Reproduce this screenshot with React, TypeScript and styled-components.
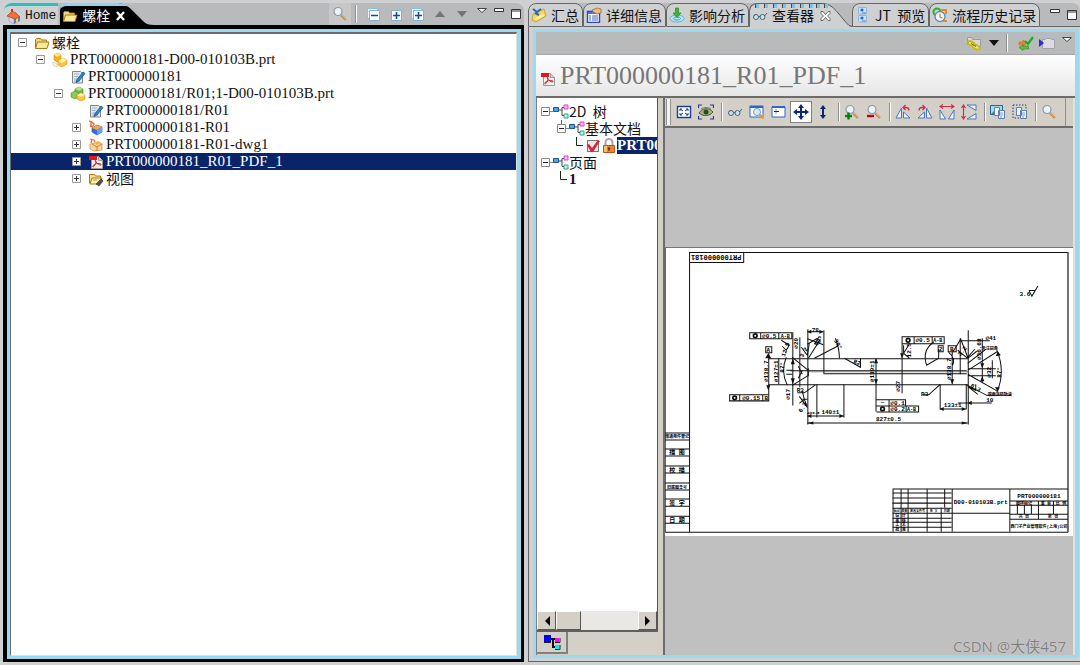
import React from "react";
import styled, { createGlobalStyle, css } from "styled-components";

const SERIF = '"Liberation Serif", "Noto Sans CJK SC", serif';
const SANS = '"Noto Sans CJK SC", "Liberation Sans", sans-serif';

const Global = createGlobalStyle`
  * { box-sizing: border-box; }
  body { margin: 0; background: #cfd0d1; color: #111; font: 14px/17px ${SERIF}; }
  button { font: inherit; color: inherit; border: 0; padding: 0; margin: 0; background: none; }
  ul { list-style: none; margin: 0; padding: 0; }
  svg { display: block; flex: none; }
`;

/* ---------- icons ---------- */

const Svg = ({ w = 16, h = 16, children }: { w?: number; h?: number; children: React.ReactNode }) => (
  <svg width={w} height={h} viewBox={`0 0 ${w} ${h}`} fill="none" aria-hidden="true">{children}</svg>
);

const HomeIcon = () => (
  <Svg>
    <path d="M3 8l5 3v5l-5-3z" fill="#d9d5ee" stroke="#8d86b8" strokeWidth=".6" />
    <path d="M8 11l6-3v5l-6 3z" fill="#5a7fd6" />
    <path d="M1 8l5-5 4 2 4 4-5 2z" fill="#ee7038" stroke="#b5431c" strokeWidth=".7" />
    <path d="M5 1h2v3H5z" fill="#b5431c" /><path d="M10 11l2-1v4l-2 1z" fill="#f4d24a" />
  </Svg>
);
const FolderIcon = () => (
  <Svg>
    <path d="M1.500 13V4.500l1-1h4l1 1.500h5v2" fill="#f3d67a" stroke="#a9781c" />
    <path d="M1.500 13.500l2-6.500h11.500l-2 6.500z" fill="#fbe896" stroke="#a9781c" />
  </Svg>
);
const ItemIcon = () => (
  <Svg>
    <path d="M2 3l4-2 3 2v5l-4 2-3-2z" fill="#f4b21f" stroke="#d58a0c" strokeWidth=".6" />
    <path d="M2 3l4-2 3 2-4 2z" fill="#ffe38a" />
    <path d="M6 9l5-3 4 2v4l-5 3-4-2z" fill="#fac63c" stroke="#d58a0c" strokeWidth=".6" />
    <path d="M6 9l5-3 4 2-5 3z" fill="#fff0b4" /><path d="M1 10l4 2v3l-4-2z" fill="#fff" stroke="#c9a04c" strokeWidth=".5" />
  </Svg>
);
const RevisionIcon = () => (
  <Svg>
    <path d="M5 3l4-2 4 2v5l-4 2-4-2z" fill="#6dbb3b" stroke="#47922b" strokeWidth=".6" />
    <path d="M5 3l4-2 4 2-4 2z" fill="#b6e28a" />
    <path d="M1 7l4-2 4 2v4l-4 2-4-2z" fill="#8acb56" stroke="#47922b" strokeWidth=".6" />
    <path d="M7 9l4-2 4 2v4l-4 2-4-2z" fill="#fac63c" stroke="#d58a0c" strokeWidth=".6" />
    <path d="M7 9l4-2 4 2-4 2z" fill="#fff0b4" />
  </Svg>
);
const FormIcon = () => (
  <Svg>
    <path d="M2.500 2.500h8l2 2v9.500h-10z" fill="#e3e9ef" stroke="#7f868d" />
    <path d="M4 5h5M4 7.500h4M4 10h3M4 12h6" stroke="#9db1c4" />
    <path d="M13 3l2 1.500-6 7.500-3 1.500 1-3z" fill="#2f8bc7" stroke="#124f82" strokeWidth=".8" />
  </Svg>
);
const DatasetIcon = () => (
  <Svg>
    <path d="M4 8l5-3 5 2v5l-5 3-5-3z" fill="#2f6fe0" stroke="#2347a8" strokeWidth=".6" />
    <path d="M4 8l5-3 5 2-5 3z" fill="#f8a83a" /><path d="M9 10l5-3v5l-5 3z" fill="#6e9cf2" />
    <path d="M1 1l3 1 2 2-1 2M3 1v5M2 6l3 1" stroke="#ef6a2e" strokeWidth="1.400" />
  </Svg>
);
const DrawingIcon = () => (
  <Svg>
    <path d="M2 7l9-2 3 2v6l-8 1-4-2z" fill="#f2d6b0" stroke="#c98a42" strokeWidth=".7" />
    <path d="M4 7l5 3 5-3M9 10v4" stroke="#e8902a" strokeWidth="1.300" /><path d="M6 6l4-2 3 2-4 2z" fill="#f8b53f" />
    <path d="M2 2l4 1 1 2M4 2l-1 4" stroke="#ef6a2e" strokeWidth="1.200" />
  </Svg>
);
const PdfIcon = () => (
  <Svg>
    <path d="M3.500 2.500h7l4 4v8h-11z" fill="#f3f3f3" stroke="#9a9a9a" />
    <path d="M10.500 2.500v4h4" fill="#d0d0d0" stroke="#9a9a9a" />
    <path d="M1 2h8v4H1z" fill="#e3161b" />
    <path d="M7 6.500c2 0 1 3-1 6-1 1-2 0-1-1 2-2 5-2.500 8-1.500 1 1-1 1.500-3 0-2-1.500-3-3-3-3.500z" stroke="#d9252a" />
  </Svg>
);
const ViewFolderIcon = () => (
  <Svg>
    <path d="M1.500 12V3.500h5l1 1.500h5v7z" fill="#f9e08a" stroke="#a9781c" />
    <path d="M2 13l2-6h10l-2 6z" fill="#fdf0b0" stroke="#a9781c" />
    <path d="M8 13l5-5 2 2-4 5z" fill="#555" stroke="#222" strokeWidth=".6" /><path d="M5 9h4" stroke="#b89443" />
  </Svg>
);
const SearchIcon = ({ sign }: { sign?: "plus" | "minus" }) => (
  <Svg>
    <path d="M9 9l5 5" stroke="#c9863a" strokeWidth="2.400" /><path d="M9.500 9l5 5" stroke="#f0bc78" />
    <circle cx="6" cy="5.500" r="4" fill="#eaf3fb" stroke="#8c98ab" strokeWidth="1.200" />
    {sign && <path d="M1 12h7" stroke={sign === "plus" ? "#0a7d12" : "#c00018"} strokeWidth="2.400" />}
    {sign === "plus" && <path d="M4.500 8.500v7" stroke="#0a7d12" strokeWidth="2.400" />}
  </Svg>
);
const BoxIcon = ({ plus, stacked }: { plus?: boolean; stacked?: boolean }) => (
  <Svg>
    {stacked && <path d="M1.500 2.500h10v10h-10z" fill="#e8f3fb" stroke="#8fbddc" />}
    <path d="M3.500 4.500h10v10h-10z" fill="#fff" stroke="#7fb2d6" />
    <path d={plus ? "M5 9.500h7M8.500 6v7" : "M5 9.500h7"} stroke="#0a4f8f" strokeWidth="1.600" />
  </Svg>
);
const Tri = ({ up, color = "#747474" }: { up?: boolean; color?: string }) => (
  <Svg w={10} h={6}><path d={up ? "M0 6h10L5 0z" : "M0 0h10L5 6z"} fill={color} /></Svg>
);
const ChevronIcon = () => <Svg w={10} h={6}><path d="M.5.5h9L5 4.500z" fill="#fff" stroke="#444" /></Svg>;
const MinIcon = () => <Svg w={10} h={5}><path d="M.5.5h9v3h-9z" fill="#fff" stroke="#333" /></Svg>;
const MaxIcon = () => <Svg w={10} h={10}><path d="M.5.5h9v9h-9zM0 2h10" fill="#fff" stroke="#333" /></Svg>;

const SummaryIcon = () => (
  <Svg>
    <path d="M2 7l11-5 2 7-10 6-4-2z" fill="#f7d65a" stroke="#c08c1e" strokeWidth=".7" />
    <path d="M2 2l4 3 4-3M4 6l4 2" stroke="#2867b8" strokeWidth="2" /><path d="M4 12l9-4" stroke="#fff3b0" strokeWidth="2" />
  </Svg>
);
const DetailsIcon = () => (
  <Svg>
    <path d="M1.500 4.500h12v11h-12z" fill="#fff" stroke="#2847c8" strokeWidth="1.400" />
    <path d="M2 5h11v2H2z" fill="#4c74e6" /><path d="M3 9h2M6 9h6M3 11h2M6 11h6M3 13h2M6 13h6" stroke="#4663b5" />
    <path d="M6 3l5-2 4 1v4l-4 1-4-2z" fill="#e9bd82" stroke="#8c6531" strokeWidth=".7" />
  </Svg>
);
const ImpactIcon = () => (
  <Svg>
    <ellipse cx="8" cy="11.500" rx="7" ry="3.500" fill="#b8e8f8" stroke="#5fb5d8" />
    <ellipse cx="8" cy="11.500" rx="3.500" ry="1.500" stroke="#3f9cc8" />
    <path d="M6.500 1h3v5H12l-4 4.500L4 6h2.500z" fill="#39b82c" stroke="#1b7e18" strokeWidth=".6" />
  </Svg>
);
const GlassesIcon = () => (
  <Svg>
    <circle cx="4" cy="9" r="2.500" fill="#cfe2ec" stroke="#466475" /><circle cx="10.500" cy="9" r="2.500" fill="#cfe2ec" stroke="#466475" />
    <path d="M6.500 8.500h1.500M12.500 8l2.500-3M2 8l2-2" stroke="#466475" />
  </Svg>
);
const JtIcon = () => (
  <Svg>
    <path d="M3.500.5h8v6.500h-8zM3.500 8.500h8v6.500h-8z" fill="#c5e4fb" stroke="#8fb8dc" />
    <circle cx="7" cy="3" r="1.600" fill="#2b5ed0" /><circle cx="7" cy="11" r="1.600" fill="#2b5ed0" />
    <path d="M7 6h4M7 14h4" stroke="#4c88d8" />
  </Svg>
);
const HistoryIcon = () => (
  <Svg>
    <circle cx="5" cy="5" r="3.500" stroke="#2fae36" strokeWidth="2" /><path d="M9 3h5v4M11 14h4" stroke="#e8882a" strokeWidth="2" />
    <circle cx="8" cy="9.500" r="5" fill="#eef6fb" stroke="#6a8fa5" strokeWidth="1.400" /><path d="M8 6.500v3.500l2.500 1" stroke="#e0762a" strokeWidth="1.200" />
  </Svg>
);
const NodesIcon = () => (
  <Svg>
    <path d="M6 6h3M9 3.500v8M9 3.500h2M9 11.500h2" stroke="#444" />
    <path d="M.5 3.500h5v4h-5z" fill="#4aa6ee" stroke="#24518c" /><path d="M11 1h4v4h-4z" fill="#f8b8f4" stroke="#e03fe0" />
    <path d="M11 10h4v4h-4z" fill="#b8f0e4" stroke="#2fa890" />
  </Svg>
);
const TreeTabIcon = () => (
  <Svg w={18}>
    <path d="M7 5h5M10 5v8h3" stroke="#111" strokeWidth="2" />
    <path d="M1 1h7v7H1z" fill="#00f" /><path d="M12 4h4v4h-4z" fill="#f0f" /><path d="M12 11h4v4h-4z" fill="#0ee" />
    <path d="M1 8.500h7M12 8.500h5V4M12 15.500h5V11" stroke="#222" />
  </Svg>
);
const LockIcon = () => (
  <Svg>
    <path d="M4.500 8V4.500a3.500 3.500 0 0 1 7 0V8" stroke="#a8a8a8" strokeWidth="2" />
    <path d="M2.500 7.500h11v7h-11z" fill="#ee8230" stroke="#b9521a" /><path d="M3 8h3v6H3z" fill="#fbc06a" />
    <circle cx="8" cy="10.500" r="1.200" fill="#6d2c0a" /><path d="M8 11v2" stroke="#6d2c0a" />
  </Svg>
);
const LinkFolderIcon = () => (
  <Svg w={18}>
    <path d="M2.500 10V2.500h4l1 2h8v9H8" fill="#d8d8d8" stroke="#9c9c9c" />
    <ellipse cx="6" cy="8.500" rx="3.500" ry="2" transform="rotate(25 6 8.500)" fill="#d8d8d8" stroke="#c8b800" strokeWidth="2" />
    <ellipse cx="11" cy="12" rx="4" ry="2" transform="rotate(25 11 12)" fill="#d8d8d8" stroke="#d0c000" strokeWidth="2" />
    <path d="M6 8.500l5 3" stroke="#6f6700" />
  </Svg>
);
const RefreshCheckIcon = () => (
  <Svg w={18}>
    <path d="M3 10V7h4V5l4 3-4 3V9H5z" fill="#ee8436" stroke="#d96a1c" strokeWidth=".7" />
    <path d="M12 11H7V9.500l-4 3 4 3V14h6z" fill="#6db54a" stroke="#3c8c22" strokeWidth=".7" />
    <path d="M9 6l3 3 5-7" stroke="#12b31c" strokeWidth="2.200" />
  </Svg>
);
const NextFolderIcon = () => (
  <Svg w={18}>
    <path d="M4.500 13.500v-9h3l1-1h4l1 1h3v9z" fill="#dcdce2" stroke="#a2a2aa" /><path d="M1 4l5 4-5 4z" fill="#2a2ad8" />
  </Svg>
);
const FitIcon = () => (
  <Svg>
    <path d="M1.500 2.500h13v11h-13z" fill="#fff" stroke="#1c3f94" strokeWidth="1.400" />
    <path d="M4 5l3 2M12 5L9 7M4 11l3-2M12 11L9 9M4 5h2M4 5v2M12 5h-2M12 5v2M4 11h2M4 11V9M12 11h-2M12 11V9" stroke="#1c3f94" />
  </Svg>
);
const EyeIcon = () => (
  <Svg>
    <path d="M.5 4V1H4M12 1h3.500v3M.5 12v3H4M12 15h3.500v-3" stroke="#1c3f94" strokeWidth="1.200" />
    <path d="M1 9c3-5 10-6 14-1-3 4-10 5-14 1z" fill="#9cba82" stroke="#4b553f" /><circle cx="8" cy="8" r="2.500" fill="#2d4a23" />
    <path d="M3 5c3-2 7-2 10 0" stroke="#777" />
  </Svg>
);
const ZoomAreaIcon = () => (
  <Svg>
    <path d="M1 2h13v11H1z" fill="#fff" stroke="#2f64c8" /><path d="M1 3h13" stroke="#2f64c8" strokeWidth="2" />
    <path d="M10.500 10.500l4 4" stroke="#d89a4a" strokeWidth="2.400" /><circle cx="8" cy="8" r="3.500" fill="#d4ecfa" stroke="#6d9dc8" />
  </Svg>
);
const CenterIcon = () => (
  <Svg><path d="M1 3h13v10H1z" fill="#fff" stroke="#2f64c8" /><path d="M1 3h13" stroke="#2f64c8" strokeWidth="2" /><path d="M3 7.500h1M6 7.500h2M5 5.500v1m0 2v1M4 7.500h2" stroke="#0c2a6a" /></Svg>
);
const PanIcon = () => (
  <Svg><path d="M8 3v10M3 8h10" stroke="#0a2878" strokeWidth="2" /><path d="M8 0l3 4H5zM8 16l3-4H5zM0 8l4-3v6zM16 8l-4-3v6z" fill="#0a2878" /></Svg>
);
const UpDownIcon = () => (
  <Svg><path d="M8 3v10" stroke="#0a2878" strokeWidth="2" /><path d="M8 1l3 4H5zM8 15l3-4H5z" fill="#0a2878" /></Svg>
);
const RotateIcon = ({ right }: { right?: boolean }) => (
  <Svg>
    <g transform={right ? "matrix(-1 0 0 1 16 0)" : undefined}>
      <path d="M1 14h5.500V4zM8.500 14H15L8.500 8z" fill="#eef3ff" stroke="#4d74c4" />
      <path d="M8 3.500h3c2 0 3 1 3 3M10.500 1L8 3.500 10.500 6" stroke="#c8324a" strokeWidth="1.300" />
    </g>
  </Svg>
);
const FlipIcon = ({ vertical }: { vertical?: boolean }) => (
  <Svg>
    <g transform={vertical ? "matrix(0 1 1 0 0 0)" : undefined}>
      <path d="M1 6v9h5.500zM15 6v9H9.500z" fill="#eef3ff" stroke="#4d74c4" />
      <path d="M2 2.500h12M4 .5l-3 2 3 2M12 .5l3 2-3 2" stroke="#c8324a" strokeWidth="1.200" />
    </g>
  </Svg>
);
const PagesIcon = ({ dotted }: { dotted?: boolean }) => (
  <Svg>
    {dotted
      ? <path d="M1 1h13v13H1z" stroke="#1c3f94" strokeDasharray="1.500 1.500" />
      : <><path d="M.5 1.500h12v9H.5z" fill="#9edcf5" stroke="#2d5f8c" /><path d="M1 10l4-4 3 4z" fill="#3f9a4c" /></>}
    <path d="M4.500 3.500h5v8h-5zM8.500 6.500h6v8h-6z" fill="#eef4fc" stroke="#5c7fae" /><path d="M10 9h3M10 11h3M10 13h2" stroke="#7fa0cc" />
  </Svg>
);

/* ---------- window frame ---------- */

const Window = styled.main`
  display: grid;
  grid-template-columns: minmax(0, 520fr) minmax(0, 552fr);
  gap: 4px;
  min-height: 100vh;
  padding: 3px 0 3px 4px;
`;
const Pane = styled.section`
  display: flex;
  flex-direction: column;
  min-width: 0;
`;
const TabBar = styled.div<{ $dark?: boolean }>`
  display: flex;
  height: ${(p) => (p.$dark ? 22 : 24)}px;
  background: #b9babc;
  border-radius: 8px 8px 0 0;
  overflow: hidden;
  font-family: ${SANS};
`;
const Filler = styled.div<{ $line?: boolean }>`
  flex: 1;
  display: flex;
  justify-content: flex-end;
  align-items: center;
  border-bottom: ${(p) => (p.$line ? "1px solid #666" : "0")};
`;
const LeftTab = styled.button<{ $active?: boolean }>`
  display: flex;
  align-items: center;
  gap: ${(p) => (p.$active ? 4 : 3)}px;
  padding: 0 2px;
  border-top: 3px solid ${(p) => (p.$active ? "#8fd3f0" : "#1fc4bb")};
  border-radius: 7px 0 0 0;
  background: ${(p) => (p.$active ? "#000" : "#cfd0d1")};
  color: ${(p) => (p.$active ? "#fff" : "#111")};
  margin-right: ${(p) => (p.$active ? 0 : 2)}px;
  ${(p) => !p.$active && css`font: 13px/17px "Liberation Mono", monospace;`}
`;
const Tool = styled.button<{ $w?: number; $lit?: boolean; $pressed?: boolean; $raise?: boolean }>`
  display: flex;
  align-items: center;
  justify-content: center;
  width: ${(p) => p.$w ?? 22}px;
  height: 22px;
  flex: none;
  padding-bottom: ${(p) => (p.$raise ? 7 : 0)}px;
  background: ${(p) => (p.$pressed ? "#fff" : p.$lit ? "#c7c7c7" : "none")};
  border: ${(p) => (p.$pressed ? "1px solid #808080" : "0")};
`;
const Divider = styled.span<{ $gap?: number }>`
  width: 2px;
  height: 18px;
  margin: 0 ${(p) => p.$gap ?? 6}px 0 4px;
  flex: none;
  background: #8e8e8e;
  border-right: 1px solid #fff;
`;
const BlackFrame = styled.div`
  flex: 1;
  display: flex;
  margin-left: -1px;
  border: solid #000;
  border-width: 4px 3px 3px 4px;
`;
const BlueFrame = styled.div`
  flex: 1;
  display: flex;
  flex-direction: column;
  min-width: 0;
  border: 3px solid #99d9f2;
  border-right-width: 4px;
  background: #fff;
`;
const LeftBody = styled.div`
  flex: 1;
  border: 2px solid #6a6a70;
  border-right-color: #e3e0d8;
  border-bottom-color: #e3e0d8;
  border-width: 2px 1px 1px 1px;
`;

/* ---------- structure tree ---------- */

const TreeRow = styled.li<{ $level: number; $selected?: boolean }>`
  display: flex;
  align-items: center;
  height: 17px;
  padding-left: ${(p) => 7 + p.$level * 18}px;
  background: ${(p) => (p.$selected ? "#0a246a" : "none")};
  color: ${(p) => (p.$selected ? "#fff" : "#111")};
`;
const Expander = styled.button`
  width: 9px;
  height: 9px;
  margin-right: 7px;
  flex: none;
`;
const TreeName = styled.button<{ $cjk?: boolean }>`
  margin-left: 2px;
  white-space: nowrap;
  font: ${(p) => (p.$cjk ? `14px/17px ${SANS}` : `15px/17px ${SERIF}`)};
`;
const ExpanderGlyph = ({ plus }: { plus?: boolean }) => (
  <Svg w={9} h={9}><path d="M.5.5h8v8h-8z" fill="#fff" stroke="#999" /><path d={plus ? "M2 4.500h5M4.500 2v5" : "M2 4.500h5"} stroke="#333" /></Svg>
);

type Row = { level: number; text: string; icon: React.ReactNode; mark?: "+" | "-"; selected?: boolean; cjk?: boolean };
const rows: Row[] = [
  { level: 0, text: "螺栓", icon: <FolderIcon />, mark: "-", cjk: true },
  { level: 1, text: "PRT000000181-D00-010103B.prt", icon: <ItemIcon />, mark: "-" },
  { level: 2, text: "PRT000000181", icon: <FormIcon /> },
  { level: 2, text: "PRT000000181/R01;1-D00-010103B.prt", icon: <RevisionIcon />, mark: "-" },
  { level: 3, text: "PRT000000181/R01", icon: <FormIcon /> },
  { level: 3, text: "PRT000000181-R01", icon: <DatasetIcon />, mark: "+" },
  { level: 3, text: "PRT000000181-R01-dwg1", icon: <DrawingIcon />, mark: "+" },
  { level: 3, text: "PRT000000181_R01_PDF_1", icon: <PdfIcon />, mark: "+", selected: true },
  { level: 3, text: "视图", icon: <ViewFolderIcon />, mark: "+", cjk: true },
];

const StructurePane = () => (
  <Pane>
    <TabBar $dark>
      <LeftTab><HomeIcon />Home</LeftTab>
      <LeftTab $active><FolderIcon />螺栓</LeftTab>
      <svg width="42" height="22" viewBox="0 0 42 22" aria-hidden="true">
        <path d="M0 0h4c9 0 13 4 18 9l9 9c3 3 6 4 11 4H0z" fill="#000" />
        <path d="M0 0h4c6 0 9 1 12 3H0z" fill="#8fd3f0" />
        <path d="M5 9l7 8M12 9l-7 8" stroke="#fff" strokeWidth="2.400" />
      </svg>
      <Filler>
        <Tool $lit aria-label="查找"><SearchIcon /></Tool><Divider />
        <Tool aria-label="全部折叠"><BoxIcon stacked /></Tool>
        <Tool aria-label="展开"><BoxIcon plus /></Tool>
        <Tool aria-label="全部展开"><BoxIcon plus stacked /></Tool>
        <Tool aria-label="上移"><Tri up /></Tool>
        <Tool aria-label="下移"><Tri /></Tool>
        <Tool $w={17} $raise aria-label="菜单"><ChevronIcon /></Tool>
        <Tool $w={17} $raise aria-label="最小化"><MinIcon /></Tool>
        <Tool $w={17} aria-label="最大化"><MaxIcon /></Tool>
      </Filler>
    </TabBar>
    <BlackFrame>
      <BlueFrame>
        <LeftBody>
          <ul>
            {rows.map((r) => (
              <TreeRow key={r.text} $level={r.level} $selected={r.selected}>
                <Expander aria-label={r.text}>{r.mark && <ExpanderGlyph plus={r.mark === "+"} />}</Expander>
                {r.icon}
                <TreeName $cjk={r.cjk}>{r.text}</TreeName>
              </TreeRow>
            ))}
          </ul>
        </LeftBody>
      </BlueFrame>
    </BlackFrame>
  </Pane>
);

/* ---------- viewer ---------- */

const ViewTab = styled.button<{ $active?: boolean }>`
  display: flex;
  align-items: center;
  gap: 4px;
  flex: none;
  padding: 0 ${(p) => (p.$active ? 0 : 3)}px 0 2px;
  white-space: nowrap;
  border: 1px solid #666;
  border-radius: 8px 8px 0 0;
  background: #cfd0d1;
  ${(p) => p.$active && css`
    border-right: 0;
    border-bottom: 0;
    border-radius: 8px 0 0 0;
    background: repeating-linear-gradient(90deg, transparent 0 5px, #444 5px 6px, #79c4e4 6px 9px) 0 0 / 100% 4px no-repeat, #cfd0d1;
  `}
`;
const Outer = styled.div`
  flex: 1;
  display: flex;
  min-width: 0;
  padding: 2px 1px 3px 4px;
  border-left: 1px solid #666;
  border-bottom: 1px solid #666;
`;
const ActionBar = styled.div`
  display: flex;
  align-items: center;
  justify-content: flex-end;
  height: 23px;
  background: #b9babc;
  border-bottom: 1px solid #a4a4a4;
`;
const TitleBar = styled.header`
  display: flex;
  align-items: center;
  gap: 4px;
  height: 41px;
  padding: 0 4px;
  background: linear-gradient(#fff, #e6e6e6);
`;
const Title = styled.h1`
  margin: 0;
  font: 26px/32px ${SERIF};
  color: #777;
`;
const TitleIcon = styled.span`
  padding-top: 6px;
`;
const Split = styled.div`
  flex: 1;
  display: grid;
  grid-template-columns: 122px minmax(0, 1fr);
  gap: 5px;
  background: #d4d0c8;
  border-top: 2px solid #6c6c6c;
`;
const DocTree = styled.div`
  display: flex;
  flex-direction: column;
  min-width: 0;
  border-left: 1px solid #808080;
`;
const DocList = styled.ul`
  flex: 1;
  padding: 5px 0 0 4px;
  background: #fff;
  overflow: hidden;
  border-right: 1px solid #555;
`;
const DocRow = styled.li<{ $indent: number }>`
  display: flex;
  align-items: center;
  height: 17px;
  padding-left: ${(p) => p.$indent}px;
  white-space: nowrap;
  font: 14px/17px ${SANS};
`;
const Selected = styled.b`
  flex: 1;
  min-width: 0;
  overflow: hidden;
  background: #0a246a;
  color: #fff;
  font: bold 15px/17px ${SERIF};
`;
const PageNo = styled.b`
  font: bold 15px/17px ${SERIF};
`;
const Check = styled.label`
  display: grid;
  place-items: center;
  flex: none;
  width: 15px;
  margin-right: 1px;
  & > * { grid-area: 1 / 1; }
  input {
    appearance: none;
    width: 12px;
    height: 12px;
    margin: 0;
    border: 1px solid #777;
    background: #e8e8e8;
  }
`;
const Scrollbar = styled.div`
  display: flex;
  height: 19px;
  background: #eae8e4;
  border-right: 1px solid #555;
`;
const ScrollPart = styled.button<{ $w: number }>`
  display: grid;
  place-items: center;
  width: ${(p) => p.$w}px;
  background: #d4d0c8;
  border: 1px solid;
  border-color: #fff #555 #555 #fff;
  &:last-child { margin-left: auto; }
`;
const BottomTabs = styled.div`
  height: 25px;
  border-top: 2px solid #606060;
`;
const BottomTab = styled.button`
  display: grid;
  place-items: center;
  width: 31px;
  height: 22px;
  border: solid #808080;
  border-width: 0 2px 2px 0;
`;
const Viewer = styled.div`
  display: flex;
  flex-direction: column;
  min-width: 0;
  border-left: 2px solid #6c6c6c;
  border-right: 2px solid #e3e0d8;
`;
const ViewerTools = styled.div`
  display: flex;
  align-items: center;
  height: 30px;
  border-bottom: 2px solid #6c6c6c;
`;
const Grip = styled.span`
  width: 5px;
  height: 26px;
  margin: 0 2px 0 1px;
  border: solid #909090;
  border-width: 0 1px;
  background: #f4f3f0;
`;
const EndLine = styled.span`
  margin-left: auto;
  width: 8px;
  height: 28px;
  border-left: 1px solid #909090;
`;
const Canvas = styled.div`
  position: relative;
  flex: 1;
  display: flex;
  align-items: center;
  background: #c0c0c0;
`;
const Sheet = styled.svg`
  width: 100%;
  height: auto;
  background: #fff;
`;
const Watermark = styled.span`
  position: absolute;
  right: 7px;
  bottom: 0;
  font: 15px/18px "Open Sans", ${SANS};
  color: #808080;
  text-shadow: 0 0 1px #e8e8e8;
`;

const Txt = ({ x, y, s = 6, r = 0, children }: { x: number; y: number; s?: number; r?: number; children: string }) => (
  <text x={x} y={y} fontSize={s} fontWeight="bold" textAnchor="middle" transform={r ? `rotate(${r} ${x} ${y})` : undefined}
    fill="#000" fontFamily='"Liberation Mono", "Noto Sans CJK SC", monospace'>{children}</text>
);

const sideBlocks: [number, string][] = [[432, "借通用件登记"], [448, "描  图"], [465, "校  描"], [482, "旧底图总号"], [498, "签  字"], [515, "日  期"]];
const concentricMarks = [[756, 335.5], [735.5, 397.5], [908.5, 340], [883, 408.500]];

const EngineeringDrawing = () => (
  <Sheet viewBox="666 247 407 288" role="img" aria-label="PRT000000181">
    <g fill="none" stroke="#111" strokeWidth="1">
      <path d="M666 247.500h407" stroke="#777" />
      <path d="M690.500 531.500V252.500H1068M666 531.500h402M690 262.500h54.500v-10" />
      <path d="M1068 252v279.500" stroke="#444" strokeWidth="1.500" />
      <path d="M666.500 248v284" stroke="#666" />
      {sideBlocks.map(([y]) => <path key={y} d={`M666 ${y}.5h24M666 ${y + 7}.5h24`} />)}
      {concentricMarks.map(([x, y]) => <circle key={x} cx={x} cy={y} r="1.800" strokeWidth="1.700" />)}
      {/* shaft outline and bore */}
      <path d="M769 358.500h199M769 384.500h199M791 370.500h176M824 373.500h143" />
      <path d="M808 371.500h160" stroke="#888" />
      <path d="M793 357l16 13M793 385l16-10M809 368v8M787 357q-6 14 1 28M793 370h-6M793 374h-6M799 366l4 8M799 378l4-8" />
      {/* left tolerance frames and dimensions */}
      <path d="M750.500 332.500h42v6h-42zM761.500 332v7M779.500 332v7M766.500 346.500h6v6h-6zM730.500 394.500h39v6h-39zM740.500 394v6M763.500 394v6" />
      <path d="M769.500 353v41M779.500 358v26M793.500 332v73M800.500 337v50M808.500 329v95M824.500 330v43" />
      <path d="M782 340l8 5-3 5-4-4M802 347l6 8 2-12M800 403l5-4 3 8M805 399l-2-8M808 407l-8-11" />
      <path d="M808 331.500h16M808 338.500l16 6M809 358l12-19M815 358l23-12M836 338q4 10 4 20M845 358l16 9v-9M808 344l10-6M820 336l-5 8" />
      <path d="M817.500 384v33M844.500 384v33M808 415.500h36M808 422.500h160M798 392.500h7l11-8M808 399h-5" />
      {/* mid section */}
      <path d="M876.500 358v53M877 399.500h29v6M877 405.500h42v6h-42M889.500 399v12M906.500 405v6" />
      <path d="M902.500 336v57M902.500 336.500h42v7h-42zM914.500 336v7M932.500 336v7M904 353l5-8M904 353l6 5M904 345v8" />
      <path d="M934 342q-12 8-7 23l12-7v-9M938.500 345.500h5v6h-5zM948.500 345.500h8v6h-8zM952.500 351v33M949 352q7 6 4 13" />
      {/* right end */}
      <path d="M960.500 338v36M968.500 330v94M960 340.500h30M982.500 338v45M968 370l30-19M968 374l30 17M997 350q9 21 0 42M992.500 360v18M968 368.500h28M968 375.500h28" />
      <path d="M953 352l8-13 7 18 7-8M958 350l10 8M968 363l18-14M968 358l9-7M966 384l21 11h24M968 386l10 8M976 384v6l-8-4" />
      <path d="M940.500 384v25M966.500 384v25M940 408.500h26M958 402.500h34M924 394.500h5l11-10" />
      <path d="M1029 290l3 6 6-10M1029 290.500h6" />
      {/* title block */}
      <path d="M893.500 531V488.500H1068M901.500 488v43M908.500 488v43M927.500 488v43M945 488v19M941.500 507v24M952.500 488v43M1010 488v43" />
      <path d="M893 492.500h59M893 497.500h59M893 502.500h59M893 507.500h59M893 512.500h117M893 517.500h59M893 521.500h59M893 526.500h59" />
      <path d="M1010 500.500h58M1010 504.500h58M1010 513.500h58M1010 518.500h58M1038.500 500v18M1053.500 500v13M1017.500 505v8M1024.500 505v8M1031.500 505v8" />
    </g>
    <path d="M769 353l-3 5h6zM769 390l-2-5h4zM808 422.500l6-1.500v3zM968 422.500l-6-1.500v3zM808 415.500l4-2v4zM844 415.500l-4-2v4zM940 408.500l4-2v4zM966 408.500l-4-2v4zM968 402.500l4-2v4zM808 331.500l4-2v4zM824 331.500l-4-2v4zM876.500 358l-2 5h4zM876.500 384l-2-5h4zM902.500 358l-2-5h4zM952.500 384l-2-5h4zM982.500 368l-2-5h4zM982.500 376l-2 5h4zM998 351l-2 5 5-1zM998 391l-3-4 5 0zM793.500 358l-2 6h4zM793.500 384l-2-6h4z" fill="#111" />
    <Txt x={717} y={255} s={7} r={180}>PRT000000181</Txt>
    {sideBlocks.map(([y, t]) => <Txt key={t} x={678} y={y + 6} s={t.length > 4 ? 4 : 6}>{t}</Txt>)}
    <Txt x={770} y={338}>⌀0.5</Txt><Txt x={786} y={338} s={5}>A-B</Txt>
    <Txt x={752} y={400}>⌀0.15</Txt><Txt x={767} y={400}>B</Txt><Txt x={769} y={352}>A</Txt>
    <Txt x={769} y={371} r={-90}>⌀138.7</Txt><Txt x={779} y={371} r={-90}>⌀127±1</Txt><Txt x={785} y={367} r={-90}>87°</Txt>
    <Txt x={791} y={394} r={-90}>⌀17</Txt><Txt x={799} y={343} r={-90}>⌀20</Txt><Txt x={788} y={350} r={-70}>12.5</Txt>
    <Txt x={816} y={332}>78</Txt><Txt x={821} y={342} r={-50}>60°</Txt><Txt x={837} y={345} r={60}>30°</Txt><Txt x={857} y={364} r={20}>R2</Txt>
    <Txt x={801} y={392}>R3</Txt><Txt x={814} y={414} s={4}>4±0.5</Txt><Txt x={831} y={414}>140±1</Txt><Txt x={889} y={421}>827±0.5</Txt>
    <Txt x={805} y={408} r={-60}>6.3</Txt><Txt x={806} y={353} r={-60}>3.2</Txt>
    <Txt x={875} y={371} r={-90}>⌀139±1</Txt><Txt x={900} y={386} r={-90}>⌀27</Txt><Txt x={911} y={350} r={-90}>12.5</Txt>
    <Txt x={923} y={342}>⌀0.5</Txt><Txt x={938} y={342} s={5}>A-B</Txt>
    <Txt x={883} y={404}>—</Txt><Txt x={898} y={405}>⌀0.1</Txt><Txt x={898} y={411}>⌀0.2</Txt><Txt x={912} y={411} s={5}>A-B</Txt>
    <Txt x={941} y={351}>2</Txt><Txt x={952} y={351}>B</Txt><Txt x={951} y={369} r={-90}>⌀138.7</Txt><Txt x={981} y={349} r={-90}>⌀36.68</Txt>
    <Txt x={991} y={340}>⌀41</Txt><Txt x={990} y={350} s={4}>未注圆角</Txt><Txt x={991} y={372} r={-90}>⌀32</Txt><Txt x={1001} y={372} r={-90}>87°</Txt>
    <Txt x={1000} y={396} s={4}>端面涂防锈油</Txt><Txt x={953} y={407}>133±1</Txt><Txt x={990} y={402}>10</Txt><Txt x={925} y={396}>R3</Txt>
    <Txt x={964} y={352} r={-50}>3.2</Txt><Txt x={975} y={389} r={30}>6.3</Txt>
    <Txt x={1025} y={296}>3.6</Txt>
    <Txt x={981} y={503} s={6}>D00-010103B.prt</Txt><Txt x={1039} y={497} s={6}>PRT000000181</Txt>
    <Txt x={901} y={511} s={3}>标记 处数</Txt><Txt x={918} y={511} s={3}>更改文件号</Txt><Txt x={934} y={511} s={3}>签 字</Txt><Txt x={947} y={511} s={3}>日期</Txt>
    <Txt x={901} y={516} s={4}>设 计</Txt><Txt x={901} y={521} s={4}>审 核</Txt><Txt x={901} y={525} s={4}>工 艺</Txt><Txt x={901} y={530} s={4}>批 准</Txt>
    <Txt x={1024} y={504} s={4}>图样标记</Txt><Txt x={1046} y={504} s={4}>重 量</Txt><Txt x={1061} y={504} s={4}>比 例</Txt>
    <Txt x={1024} y={517} s={4}>共 页</Txt><Txt x={1053} y={517} s={4}>第 页</Txt>
    <Txt x={1039} y={527} s={4}>西门子产业管理软件(上海)公司</Txt>
  </Sheet>
);

const Branch = ({ kind }: { kind: "root" | "child" | "leaf" }) => (
  <svg width="12" height="17" viewBox="0 0 12 17" fill="none" aria-hidden="true">
    {kind === "leaf" ? <path d="M3.500 0v8.500H10" stroke="#222" /> : <>
      {kind === "child" && <path d="M4.500 0v4" stroke="#555" />}
      <path d="M.5 4.500h8v8h-8zM8 8.500h4" stroke="#888" /><path d="M2 8.500h5" stroke="#222" />
    </>}
  </svg>
);

const viewTabs: [string, React.ReactNode][] = [["汇总", <SummaryIcon />], ["详细信息", <DetailsIcon />], ["影响分析", <ImpactIcon />]];
const toolGroups: [string, React.ReactNode][][] = [
  [["适合窗口", <FitIcon />], ["显示", <EyeIcon />]],
  [["查看", <GlassesIcon />], ["区域缩放", <ZoomAreaIcon />], ["居中", <CenterIcon />], ["平移", <PanIcon />], ["缩放", <UpDownIcon />]],
  [["放大", <SearchIcon sign="plus" />], ["缩小", <SearchIcon sign="minus" />]],
  [["左旋转", <RotateIcon />], ["右旋转", <RotateIcon right />], ["水平翻转", <FlipIcon />], ["垂直翻转", <FlipIcon vertical />]],
  [["复制图像", <PagesIcon />], ["复制区域", <PagesIcon dotted />]],
  [["搜索", <SearchIcon />]],
];

const ViewerPane = () => (
  <Pane>
    <TabBar>
      {viewTabs.map(([name, icon]) => <ViewTab key={name}>{icon}{name}</ViewTab>)}
      <ViewTab $active><GlassesIcon />查看器</ViewTab>
      <svg width="38" height="24" viewBox="0 0 38 24" fill="none" aria-hidden="true">
        <path d="M0 0h8q8 0 14 7l10 12q3 4 6 5H0z" fill="#cfd0d1" />
        <path d="M0 .5h8q8 0 14 7l10 12q3 4 6 4" stroke="#555" />
        <path d="M3 1h3v4H3zM11 1h3v4h-3z" fill="#79c4e4" /><path d="M2.500 1v4M10.500 1v4" stroke="#444" />
        <path d="M7 8.500h2l2.500 3 2.500-3h2v2L13.500 13l2.500 2.500v2h-2l-2.500-3-2.500 3H7v-2L9.500 13 7 10.500z" fill="#fff" stroke="#555" strokeWidth=".8" />
      </svg>
      <ViewTab><JtIcon />JT&nbsp; 预览</ViewTab>
      <ViewTab><HistoryIcon />流程历史记录</ViewTab>
      <Filler $line>
        <Tool $w={17} $raise aria-label="最小化"><MinIcon /></Tool>
        <Tool $w={17} aria-label="最大化"><MaxIcon /></Tool>
      </Filler>
    </TabBar>
    <Outer>
      <BlueFrame>
        <ActionBar>
          <Tool aria-label="链接"><LinkFolderIcon /></Tool>
          <Tool $w={17} aria-label="更多"><Tri color="#111" /></Tool>
          <Divider />
          <Tool aria-label="检查"><RefreshCheckIcon /></Tool>
          <Tool aria-label="下一个"><NextFolderIcon /></Tool>
          <Tool $raise $w={17} aria-label="菜单"><ChevronIcon /></Tool>
        </ActionBar>
        <TitleBar><TitleIcon><PdfIcon /></TitleIcon><Title>PRT000000181_R01_PDF_1</Title></TitleBar>
        <Split>
          <DocTree>
            <DocList>
              <DocRow $indent={0}><Branch kind="root" /><NodesIcon />2D&nbsp; 树</DocRow>
              <DocRow $indent={16}><Branch kind="child" /><NodesIcon />基本文档</DocRow>
              <DocRow $indent={32}>
                <Branch kind="leaf" />
                <Check>
                  <input type="checkbox" defaultChecked aria-label="PRT000000181" />
                  <Svg><path d="M2 7l2-1 3 4 6-8 2 1-7 11H6z" fill="#dc2338" /></Svg>
                </Check>
                <LockIcon /><Selected>PRT00</Selected>
              </DocRow>
              <DocRow $indent={0}><Branch kind="root" /><NodesIcon />页面</DocRow>
              <DocRow $indent={16}><Branch kind="leaf" /><PageNo>1</PageNo></DocRow>
            </DocList>
            <Scrollbar>
              <ScrollPart $w={19} aria-label="向左"><Svg w={6} h={10}><path d="M6 0v10L1 5z" fill="#000" /></Svg></ScrollPart>
              <ScrollPart $w={25} aria-label="滑块" />
              <ScrollPart $w={19} aria-label="向右"><Svg w={6} h={10}><path d="M0 0v10l5-5z" fill="#000" /></Svg></ScrollPart>
            </Scrollbar>
            <BottomTabs><BottomTab aria-label="树"><TreeTabIcon /></BottomTab></BottomTabs>
          </DocTree>
          <Viewer>
            <ViewerTools>
              <Grip />
              {toolGroups.map((group, i) => (
                <React.Fragment key={i}>
                  {i > 0 && <Divider $gap={1} />}
                  {group.map(([name, icon]) => <Tool key={name} $pressed={name === "平移"} aria-label={name}>{icon}</Tool>)}
                </React.Fragment>
              ))}
              <EndLine />
            </ViewerTools>
            <Canvas>
              <EngineeringDrawing />
              <Watermark>CSDN @大侠457</Watermark>
            </Canvas>
          </Viewer>
        </Split>
      </BlueFrame>
    </Outer>
  </Pane>
);

export default function App() {
  return (
    <>
      <Global />
      <Window>
        <StructurePane />
        <ViewerPane />
      </Window>
    </>
  );
}
